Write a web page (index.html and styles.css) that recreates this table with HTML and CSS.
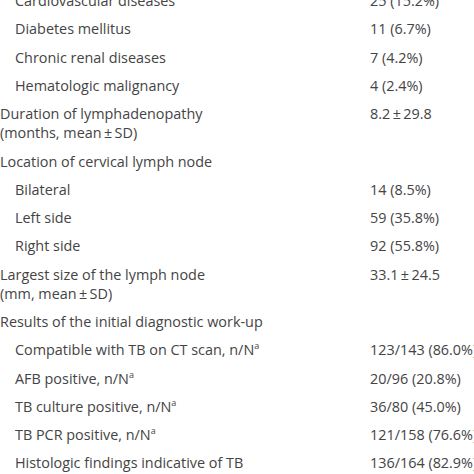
FILE: index.html
```html
<!DOCTYPE html>
<html>
<head>
<meta charset="utf-8">
<link rel="stylesheet" href="styles.css">
</head>
<body>
<table class="tbl">
  <colgroup><col class="c1"><col class="c2"></colgroup>
  <tr><td class="sub">Cardiovascular diseases</td><td>25 (15.2%)</td></tr>
  <tr><td class="sub">Diabetes mellitus</td><td>11 (6.7%)</td></tr>
  <tr><td class="sub">Chronic renal diseases</td><td>7 (4.2%)</td></tr>
  <tr><td class="sub">Hematologic malignancy</td><td>4 (2.4%)</td></tr>
  <tr><td>Duration of lymphadenopathy<br>(months, mean&thinsp;±&thinsp;SD)</td><td>8.2&thinsp;±&thinsp;29.8</td></tr>
  <tr><td colspan="2">Location of cervical lymph node</td></tr>
  <tr><td class="sub">Bilateral</td><td>14 (8.5%)</td></tr>
  <tr><td class="sub">Left side</td><td>59 (35.8%)</td></tr>
  <tr><td class="sub">Right side</td><td>92 (55.8%)</td></tr>
  <tr><td>Largest size of the lymph node<br>(mm, mean&thinsp;±&thinsp;SD)</td><td>33.1&thinsp;±&thinsp;24.5</td></tr>
  <tr><td colspan="2">Results of the initial diagnostic work-up</td></tr>
  <tr><td class="sub">Compatible with TB on CT scan, n/N<sup class="sup">a</sup></td><td>123/143 (86.0%)</td></tr>
  <tr><td class="sub">AFB positive, n/N<sup class="sup">a</sup></td><td>20/96 (20.8%)</td></tr>
  <tr><td class="sub">TB culture positive, n/N<sup class="sup">a</sup></td><td>36/80 (45.0%)</td></tr>
  <tr><td class="sub">TB PCR positive, n/N<sup class="sup">a</sup></td><td>121/158 (76.6%)</td></tr>
  <tr><td class="sub">Histologic findings indicative of TB</td><td>136/164 (82.9%)</td></tr>
</table>
</body>
</html>
```
FILE: styles.css
```css
html, body {
  margin: 0;
  padding: 0;
  background: #ffffff;
  overflow: hidden;
}
body {
  width: 474px;
  height: 474px;
  font-family: "Open Sans", "Noto Sans", sans-serif;
  font-size: 14.4px;
  color: #444444;
}
.tbl {
  border-collapse: collapse;
  margin-top: -13.4px;
  width: 474px;
  table-layout: fixed;
}
.c1 {
  width: 370px;
}
.c2 {
  width: 104px;
}
.tbl td {
  padding: 4.6px 0 4.7px 0;
  line-height: 19px;
  vertical-align: top;
  white-space: nowrap;
}
.tbl td.sub {
  padding-left: 15px;
}
.sup {
  font-size: 9px;
  line-height: 0;
  vertical-align: 6px;
}
```
